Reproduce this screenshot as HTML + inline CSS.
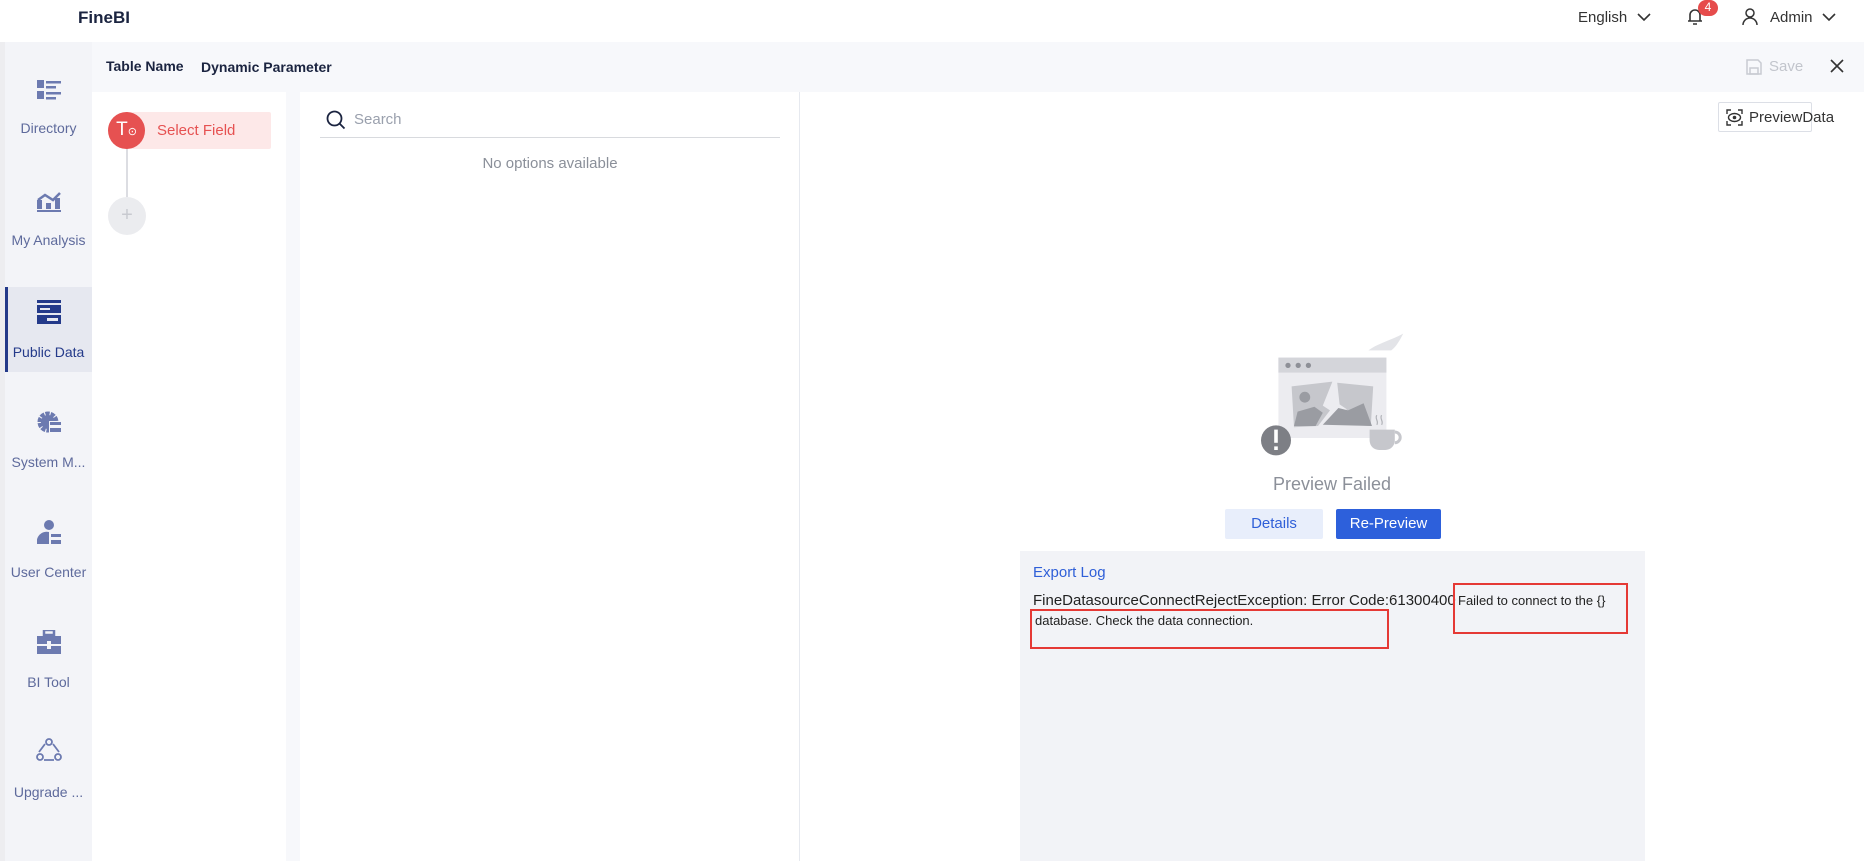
<!DOCTYPE html>
<html><head><meta charset="utf-8"><style>
*{box-sizing:border-box;margin:0;padding:0}
body{width:1864px;height:861px;overflow:hidden;background:#fff;font-family:"Liberation Sans",Arial,sans-serif;position:relative}
.a{position:absolute}
.nav{left:5px;top:42px;width:87px;height:819px;background:#f3f4f8}
.edge{left:0;top:42px;width:5px;height:819px;background:#ededf0}
.it{position:absolute;left:0;width:87px;text-align:center;color:#5e6a9c;font-size:14px;white-space:nowrap}
.it svg{display:block;margin:0 auto 20px}
</style></head><body>
<div class="a" style="left:0;top:0;width:1864px;height:42px;background:#fff"></div>
<div class="a" style="left:78px;top:8px;font-size:17px;font-weight:bold;color:#1b2440">FineBI</div>
<div class="a" style="left:1578px;top:9px;font-size:15px;color:#333">English</div>
<svg class="a" style="left:1637px;top:12px" width="14" height="10"><path d="M1 2l6 6 6-6" fill="none" stroke="#333" stroke-width="1.6"/></svg>
<svg class="a" style="left:1686px;top:7px" width="18" height="20"><path d="M4 14V8a5 5 0 0110 0v6h2H2h2M7 17h4" fill="none" stroke="#333" stroke-width="1.6"/></svg>
<div class="a" style="left:1698px;top:0;width:20px;height:16px;border-radius:8px;background:#e64c4c;color:#fff;font-size:12px;text-align:center;line-height:14px">4</div>
<svg class="a" style="left:1742px;top:8px" width="16" height="18"><circle cx="8" cy="5" r="4" fill="none" stroke="#333" stroke-width="1.5"/><path d="M1 17a7 7 0 0114 0" fill="none" stroke="#333" stroke-width="1.5"/></svg>
<div class="a" style="left:1770px;top:9px;font-size:15px;color:#333">Admin</div>
<svg class="a" style="left:1822px;top:12px" width="14" height="10"><path d="M1 2l6 6 6-6" fill="none" stroke="#333" stroke-width="1.6"/></svg>

<div class="a edge"></div>
<div class="a nav"></div>
<div class="a" style="left:5px;top:287px;width:87px;height:85px;background:#e6e8f0;border-left:3px solid #243a8a"></div>
<div class="it" style="left:5px;top:80px"><svg width="24" height="20"><rect x="0" y="0" width="7" height="8" fill="#6c7ab0"/><rect x="0" y="11" width="7" height="8" fill="#6c7ab0"/><rect x="9" y="1" width="15" height="2.5" fill="#6c7ab0"/><rect x="9" y="6" width="10" height="2.5" fill="#6c7ab0"/><rect x="9" y="12" width="15" height="2.5" fill="#6c7ab0"/><rect x="9" y="17" width="10" height="2.5" fill="#6c7ab0"/></svg>Directory</div>
<div class="it" style="left:5px;top:188px"><svg width="24" height="24"><path d="M1 12l7-5 8 5 7-7" fill="none" stroke="#6c7ab0" stroke-width="2.5"/><rect x="0" y="12" width="5" height="9" fill="#6c7ab0"/><rect x="9" y="15" width="5" height="6" fill="#6c7ab0"/><rect x="18" y="10" width="5" height="11" fill="#6c7ab0"/><rect x="0" y="22" width="24" height="2" fill="#6c7ab0"/></svg>My Analysis</div>
<div class="it" style="left:5px;top:300px;color:#243a8a"><svg width="24" height="24"><rect x="0" y="0" width="24" height="3" fill="#243a8a"/><rect x="0" y="5" width="24" height="8" fill="#243a8a"/><rect x="0" y="15" width="24" height="9" fill="#243a8a"/><rect x="10" y="18" width="11" height="3" fill="#e6e8f0"/><rect x="3" y="8" width="10" height="2" fill="#e6e8f0"/></svg>Public Data</div>
<div class="it" style="left:5px;top:410px"><svg width="24" height="24"><circle cx="11" cy="12" r="8" fill="none" stroke="#6c7ab0" stroke-width="5" stroke-dasharray="4 1"/><circle cx="11" cy="12" r="7" fill="#6c7ab0"/><rect x="12" y="11" width="12" height="13" fill="#f3f4f8"/><rect x="13" y="12" width="11" height="3" fill="#6c7ab0"/><rect x="13" y="18" width="11" height="4" fill="#6c7ab0"/></svg>System M...</div>
<div class="it" style="left:5px;top:520px"><svg width="24" height="24"><circle cx="12" cy="5" r="5" fill="#6c7ab0"/><path d="M0 24a10 10 0 0112-12v12z" fill="#6c7ab0"/><rect x="14" y="14" width="10" height="3" fill="#6c7ab0"/><rect x="14" y="20" width="10" height="4" fill="#6c7ab0"/></svg>User Center</div>
<div class="it" style="left:5px;top:630px"><svg width="24" height="24"><rect x="7" y="0" width="10" height="5" fill="none" stroke="#6c7ab0" stroke-width="2.5"/><rect x="0" y="6" width="24" height="18" fill="#6c7ab0"/><rect x="0" y="14" width="24" height="2" fill="#f3f4f8"/><rect x="10" y="11" width="4" height="8" fill="#f3f4f8"/></svg>BI Tool</div>
<div class="it" style="left:5px;top:738px"><svg width="26" height="26"><circle cx="13" cy="4" r="3" fill="none" stroke="#6c7ab0" stroke-width="1.8"/><circle cx="4" cy="19" r="3" fill="none" stroke="#6c7ab0" stroke-width="1.8"/><circle cx="22" cy="19" r="3" fill="none" stroke="#6c7ab0" stroke-width="1.8"/><path d="M9 6L3 14M17 6l6 8M8 22h10" fill="none" stroke="#6c7ab0" stroke-width="1.8"/></svg>Upgrade ...</div>

<div class="a" style="left:92px;top:42px;width:1772px;height:50px;background:#f7f8fb"></div>
<div class="a" style="left:106px;top:58px;font-size:14px;font-weight:bold;color:#1b2440">Table Name</div>
<div class="a" style="left:201px;top:59px;font-size:14px;font-weight:bold;color:#1b2440">Dynamic Parameter</div>
<svg class="a" style="left:1745px;top:58px" width="18" height="18"><path d="M2 2h11l3 3v11H2z" fill="none" stroke="#c8cbd2" stroke-width="1.5"/><rect x="5" y="10" width="8" height="6" fill="none" stroke="#c8cbd2" stroke-width="1.5"/></svg>
<div class="a" style="left:1769px;top:58px;font-size:15px;color:#c2c5cc">Save</div>
<svg class="a" style="left:1829px;top:58px" width="16" height="16"><path d="M2 2l12 12M14 2L2 14" stroke="#333" stroke-width="1.6"/></svg>

<div class="a" style="left:93px;top:92px;width:193px;height:769px;background:#fff"></div>
<div class="a" style="left:286px;top:92px;width:14px;height:769px;background:#f7f8fb"></div>
<div class="a" style="left:130px;top:112px;width:141px;height:37px;background:#fde8e8;border-radius:2px"></div>
<div class="a" style="left:108px;top:112px;width:37px;height:37px;border-radius:50%;background:#e65151;color:#fff;font-size:19px;line-height:36px;text-align:center">T<span style="font-size:11px">⊙</span></div>
<div class="a" style="left:157px;top:122px;font-size:15px;color:#e65151">Select Field</div>
<div class="a" style="left:126px;top:149px;width:2px;height:48px;background:#dcdde2"></div>
<div class="a" style="left:108px;top:197px;width:38px;height:38px;border-radius:50%;background:#ebecef;color:#c8cad0;font-size:20px;text-align:center;line-height:36px">+</div>

<div class="a" style="left:300px;top:92px;width:500px;height:769px;background:#fff;border-right:1px solid #e6e9ef"></div>
<svg class="a" style="left:326px;top:110px" width="20" height="20"><circle cx="8.5" cy="8.5" r="7" fill="none" stroke="#1b2440" stroke-width="1.8"/><path d="M13.5 13.5l5 5" stroke="#1b2440" stroke-width="1.8"/></svg>
<div class="a" style="left:354px;top:111px;font-size:15px;color:#9aa0ad">Search</div>
<div class="a" style="left:320px;top:137px;width:460px;height:1px;background:#d8dade"></div>
<div class="a" style="left:300px;top:155px;width:500px;text-align:center;font-size:15px;color:#8a8f99">No options available</div>

<div class="a" style="left:1718px;top:102px;width:94px;height:30px;border:1px solid #dcdfe6;border-radius:2px;background:#fff"></div>
<svg class="a" style="left:1726px;top:109px" width="17" height="17"><path d="M1 5V1h4M12 1h4v4M16 12v4h-4M5 16H1v-4" fill="none" stroke="#333" stroke-width="1.4"/><ellipse cx="8.5" cy="8.5" rx="6" ry="4" fill="none" stroke="#333" stroke-width="1.4"/><circle cx="8.5" cy="8.5" r="1.8" fill="#333"/></svg>
<div class="a" style="left:1749px;top:109px;font-size:15px;color:#333">PreviewData</div>

<svg class="a" style="left:1186px;top:324px" width="264" height="156" viewBox="0 0 220 130">
<path d="M152 22c8-6 18-8 29-14c-3 6-6 11-10 14c-6 0-13 0-19 0z" fill="#e3e4e8"/>
<rect x="77" y="28" width="90" height="67" fill="#ececf0"/>
<rect x="77" y="28" width="90" height="12.5" fill="#d4d5da"/>
<circle cx="85" cy="34.5" r="2.2" fill="#8e9097"/><circle cx="93.5" cy="34.5" r="2.2" fill="#8e9097"/><circle cx="102" cy="34.5" r="2.2" fill="#8e9097"/>
<path d="M88 52l34-4 -8 20 6 4 -10 13 -20 1z" fill="#c6c7cc"/>
<path d="M126 49l30 3 -2 33 -30-2 10-12 -6-4z" fill="#c6c7cc"/>
<circle cx="99" cy="61" r="4.5" fill="#9a9ca2"/>
<path d="M90 85l3-12 14-4 7 5 -6 11z" fill="#9a9ca2"/>
<path d="M114 84l13-14 8 2 13-6 7 19z" fill="#9a9ca2"/>
<circle cx="75" cy="97" r="12.5" fill="#7d7f85"/>
<rect x="73.5" y="88" width="3" height="11" fill="#fff"/><rect x="73.5" y="102" width="3" height="3" fill="#fff"/>
<path d="M153 88h21v9a8 8 0 01-8 8h-5a8 8 0 01-8-8z" fill="#c6c7cc"/>
<path d="M174 90a4.5 4.5 0 010 9" fill="none" stroke="#c6c7cc" stroke-width="2.5"/>
<path d="M159 76c-2 3 2 5 0 8M163 76c-2 3 2 5 0 8" fill="none" stroke="#b0b2b7" stroke-width="1"/>
</svg>
<div class="a" style="left:1200px;top:474px;width:264px;text-align:center;font-size:18px;color:#8c9099">Preview Failed</div>
<div class="a" style="left:1225px;top:509px;width:98px;height:30px;background:#e8eefb;border-radius:2px;color:#2f5fd8;font-size:15px;text-align:center;line-height:30px">Details</div>
<div class="a" style="left:1336px;top:509px;width:105px;height:30px;background:#2d60db;border-radius:2px;color:#fff;font-size:15px;text-align:center;line-height:30px">Re-Preview</div>

<div class="a" style="left:1020px;top:551px;width:625px;height:310px;background:#f2f3f7"></div>
<div class="a" style="left:1033px;top:564px;font-size:15px;color:#2f5fd8">Export Log</div>
<div class="a" style="left:1033px;top:592px;font-size:15px;color:#222">FineDatasourceConnectRejectException: Error Code:61300400</div>
<div class="a" style="left:1035px;top:613px;font-size:13px;color:#222">database. Check the data connection.</div>
<div class="a" style="left:1458px;top:593px;font-size:13px;color:#222">Failed to connect to the {}</div>
<div class="a" style="left:1030px;top:609px;width:359px;height:40px;border:2px solid #e53935"></div>
<div class="a" style="left:1453px;top:583px;width:175px;height:51px;border:2px solid #e53935"></div>
</body></html>
